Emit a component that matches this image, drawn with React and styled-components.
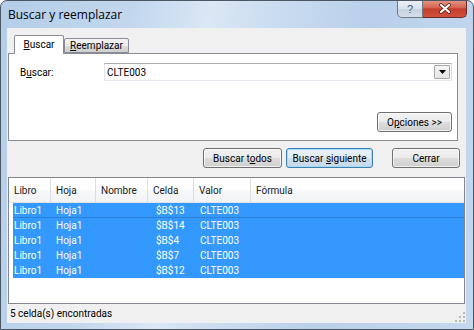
import React from 'react';
import styled, { createGlobalStyle } from 'styled-components';

const GlobalStyle = createGlobalStyle`
  html, body { margin: 0; padding: 0; background: #fff; }
  body { font-family: Roboto, "Liberation Sans", sans-serif; font-size: 10px; color: #000; }
`;

const Window = styled.div`
  width: 474px;
  height: 330px;
  box-sizing: border-box;
  display: flex;
  flex-direction: column;
  padding: 0 7px 6px 6px;
  border: 1px solid #4c5764;
  border-radius: 7px 7px 0 0;
  background: linear-gradient(100deg, #b4cde8 0%, #c2d7ee 25%, #dae7f5 40%, #cadcf0 52%, #b9d0ea 70%, #c4d8ee 100%);
  overflow: hidden;
`;

const TitleBar = styled.div`
  height: 27px;
  display: flex;
  align-items: flex-start;
  flex-shrink: 0;
`;

const Title = styled.div`
  padding: 6px 0 0 1px;
  line-height: 16px;
  font-family: "Open Sans", "Noto Sans", sans-serif;
  font-size: 12px;
  color: #000;
`;

const Caption = styled.div`
  display: flex;
  margin: -1px -1px 0 auto;
`;

const HelpButton = styled.div`
  width: 26px;
  height: 18px;
  box-sizing: border-box;
  border: 1px solid #6d7886;
  border-top: none;
  border-radius: 0 0 0 5px;
  background: linear-gradient(#eef2f7, #d9e1eb 50%, #c7d2de 51%, #d6dee8);
  display: flex;
  align-items: center;
  justify-content: center;
  font-family: "Liberation Sans", sans-serif;
  font-size: 11px;
  color: #4a5563;
`;

const CloseButton = styled.div`
  width: 44px;
  height: 18px;
  box-sizing: border-box;
  border: 1px solid #6b2a25;
  border-top: none;
  border-left: none;
  border-radius: 0 0 5px 0;
  background: linear-gradient(#e59a8b, #d4634f 45%, #c43e2c 52%, #cf533d);
  display: flex;
  align-items: center;
  justify-content: center;
`;

const Client = styled.div`
  flex: 1;
  display: flex;
  flex-direction: column;
  background: #f0f0f0;
  min-height: 0;
`;

const TabStrip = styled.div`
  height: 25px;
  display: flex;
  align-items: flex-end;
  padding-left: 7px;
  flex-shrink: 0;
`;

const Tab = styled.div`
  position: relative;
  z-index: 1;
  box-sizing: border-box;
  width: ${p => (p.$active ? 50 : 65)}px;
  height: ${p => (p.$active ? 19 : 15)}px;
  margin-bottom: ${p => (p.$active ? -1 : 0)}px;
  border: 1px solid #898c95;
  border-bottom: ${p => (p.$active ? 'none' : '1px solid #898c95')};
  border-radius: 2px 2px 0 0;
  background: ${p => (p.$active ? '#fff' : 'linear-gradient(#f3f3f3, #ebebeb 50%, #dddddd 51%, #cfcfcf)')};
  display: flex;
  align-items: center;
  justify-content: center;
  padding-bottom: ${p => (p.$active ? 1 : 0)}px;
`;

const Panel = styled.div`
  margin-left: 1px;
  width: 450px;
  height: 88px;
  box-sizing: border-box;
  border: 1px solid #898c95;
  background: #fff;
  padding: 9px 5px 0 11px;
  display: flex;
  flex-direction: column;
  flex-shrink: 0;
`;

const FieldRow = styled.div`
  display: flex;
  align-items: center;
  height: 18px;
`;

const Label = styled.div`
  width: 84px;
`;

const Combo = styled.div`
  flex: 1;
  height: 18px;
  box-sizing: border-box;
  border: 1px solid #abadb3;
  border-color: #abadb3 #dbdfe6 #e3e9ef #e2e3ea;
  background: #fff;
  display: flex;
  align-items: center;
  padding-left: 2px;
`;

const ComboText = styled.span`
  flex: 1;
`;

const DropButton = styled.div`
  width: 16px;
  height: 14px;
  box-sizing: border-box;
  margin-right: 1px;
  border: 1px solid #a7a7a7;
  border-radius: 1px;
  background: linear-gradient(#f6f6f6, #e4e4e4);
  display: flex;
  align-items: center;
  justify-content: center;
`;

const Button = styled.div`
  width: ${p => p.$w}px;
  height: 20px;
  box-sizing: border-box;
  border: 1px solid ${p => (p.$focus ? '#3c7fb1' : '#707070')};
  border-radius: 3px;
  background: ${p => (p.$focus
    ? 'linear-gradient(#eaf2f8, #e0ebf4 50%, #cfe0ee 51%, #c5d9ea)'
    : 'linear-gradient(#f2f2f2, #ebebeb 50%, #dddddd 51%, #cfcfcf)')};
  box-shadow: inset 0 0 0 1px ${p => (p.$focus ? '#a6dcf6' : 'rgba(255,255,255,0.7)')};
  display: flex;
  align-items: center;
  justify-content: center;
  white-space: pre;
  margin-right: ${p => p.$mr || 0}px;
`;

const OptionsButton = styled(Button)`
  align-self: flex-end;
  margin-top: 31px;
`;

const ButtonRow = styled.div`
  margin-top: 7px;
  display: flex;
  justify-content: flex-end;
  padding-right: 6px;
  flex-shrink: 0;
`;

const U = styled.span`
  text-decoration: underline;
`;

const List = styled.div`
  margin: 9px 1px 0 1px;
  height: 127px;
  box-sizing: border-box;
  border: 1px solid #828790;
  background: #fff;
  display: flex;
  flex-direction: column;
  overflow: hidden;
  flex-shrink: 0;
`;

const cols = '42px 45px 52px 46px 57px 1fr';

const Header = styled.div`
  display: grid;
  grid-template-columns: ${cols};
  height: 25px;
  box-sizing: border-box;
  border-bottom: 1px solid #e3e4e6;
  background: linear-gradient(#ffffff, #ffffff 50%, #f7f8fa 51%, #f2f3f5);
`;

const HeadCell = styled.div`
  display: flex;
  align-items: center;
  padding-left: 5px;
  border-right: ${p => (p.$last ? 'none' : '1px solid #dcdde0')};
  color: #1a1a1a;
`;

const Row = styled.div`
  display: grid;
  grid-template-columns: 38px 45px 52px 46px 57px 1fr;
  margin-left: 4px;
  height: 15px;
  box-sizing: border-box;
  background: #3399ff;
  color: #fff;
  border-bottom: ${p => (p.$focus ? '1px solid #2c7fd4' : 'none')};
`;

const Cell = styled.div`
  display: flex;
  align-items: center;
  padding-left: ${p => p.$pad}px;
  white-space: nowrap;
`;

const StatusBar = styled.div`
  flex: 1;
  display: flex;
  align-items: center;
  padding-left: 3px;
`;

const Grip = styled.svg`
  align-self: flex-end;
  margin: 0 1px 1px auto;
`;

const rows = [
  { cell: '$B$13' },
  { cell: '$B$14' },
  { cell: '$B$4' },
  { cell: '$B$7' },
  { cell: '$B$12' },
];

export default function App() {
  return (
    <>
      <GlobalStyle />
      <Window>
        <TitleBar>
          <Title>Buscar y reemplazar</Title>
          <Caption>
            <HelpButton>?</HelpButton>
            <CloseButton>
              <svg width="14" height="11" viewBox="0 0 14 11">
                <path d="M3 2 L11 9 M11 2 L3 9" stroke="#5a1a14" strokeWidth="3.6" strokeLinecap="round" />
                <path d="M3 2 L11 9 M11 2 L3 9" stroke="#fff" strokeWidth="2.2" strokeLinecap="round" />
              </svg>
            </CloseButton>
          </Caption>
        </TitleBar>

        <Client>
          <TabStrip>
            <Tab $active><span><U>B</U>uscar</span></Tab>
            <Tab><span><U>R</U>eemplazar</span></Tab>
          </TabStrip>

          <Panel>
            <FieldRow>
              <Label>B<U>u</U>scar:</Label>
              <Combo>
                <ComboText>CLTE003</ComboText>
                <DropButton>
                  <svg width="7" height="4" viewBox="0 0 7 4">
                    <path d="M0 0 H7 L3.5 4 Z" fill="#000" />
                  </svg>
                </DropButton>
              </Combo>
            </FieldRow>
            <OptionsButton $w={75}><span>O<U>p</U>ciones &gt;&gt;</span></OptionsButton>
          </Panel>

          <ButtonRow>
            <Button $w={79} $mr={4}><span>Buscar t<U>o</U>dos</span></Button>
            <Button $w={87} $mr={19} $focus><span>Buscar <U>s</U>iguiente</span></Button>
            <Button $w={68}><span>Cerrar</span></Button>
          </ButtonRow>

          <List>
            <Header>
              <HeadCell>Libro</HeadCell>
              <HeadCell>Hoja</HeadCell>
              <HeadCell>Nombre</HeadCell>
              <HeadCell>Celda</HeadCell>
              <HeadCell>Valor</HeadCell>
              <HeadCell $last>Fórmula</HeadCell>
            </Header>
            {rows.map((r, i) => (
              <Row key={i} $focus={i === 0}>
                <Cell $pad={1}>Libro1</Cell>
                <Cell $pad={5}>Hoja1</Cell>
                <Cell $pad={5}></Cell>
                <Cell $pad={8}>{r.cell}</Cell>
                <Cell $pad={6}>CLTE003</Cell>
                <Cell $pad={5}></Cell>
              </Row>
            ))}
          </List>

          <StatusBar>
            <span>5 celda(s) encontradas</span>
            <Grip width="10" height="10" viewBox="0 0 10 10">
              <g fill="#b8b8b8">
                <rect x="8" y="0" width="2" height="2" />
                <rect x="4" y="4" width="2" height="2" />
                <rect x="8" y="4" width="2" height="2" />
                <rect x="0" y="8" width="2" height="2" />
                <rect x="4" y="8" width="2" height="2" />
                <rect x="8" y="8" width="2" height="2" />
              </g>
            </Grip>
          </StatusBar>
        </Client>
      </Window>
    </>
  );
}
